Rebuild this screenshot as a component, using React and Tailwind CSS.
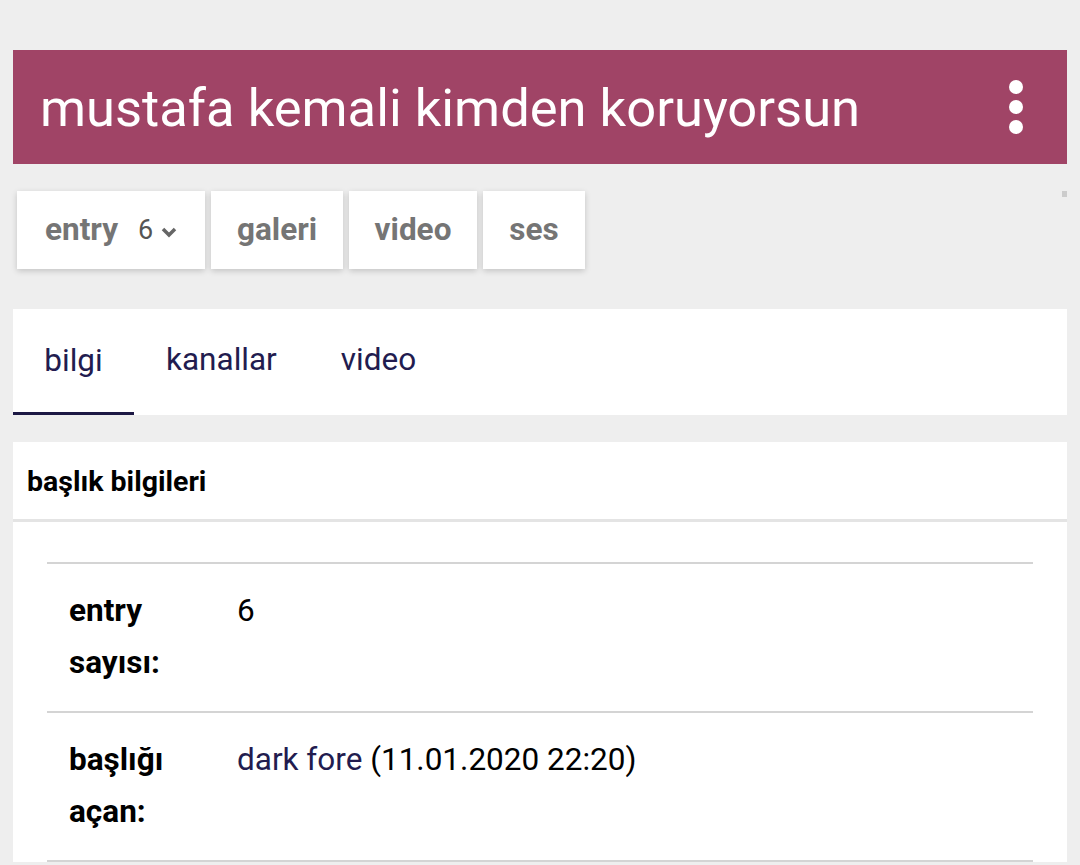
import React from 'react';

const rows = [
  { label: ['entry', 'sayısı:'], value: <span>6</span> },
  {
    label: ['başlığı', 'açan:'],
    value: (
      <span>
        <span className="text-[#221c4f]">dark fore</span> (11.01.2020 22:20)
      </span>
    ),
  },
];

const Dots = () => (
  <svg width="16" height="56" viewBox="0 0 16 56" className="fill-white">
    <circle cx="8" cy="8" r="7" />
    <circle cx="8" cy="28" r="7" />
    <circle cx="8" cy="48" r="7" />
  </svg>
);

export default function App() {
  return (
    <div className="min-h-[865px] bg-[#eeeeee] pt-[50px] px-[13px] text-black font-['Roboto',sans-serif] overflow-hidden h-[865px]">
      <div className="h-[114px] bg-[#a04466] flex items-center justify-between pl-[27px] pr-[43px]">
        <h1 className="text-white text-[52.5px] leading-none pt-[2px]">mustafa kemali kimden koruyorsun</h1>
        <Dots />
      </div>

      <div className="flex items-start justify-between mt-[27px]">
        <div className="flex gap-[6px] ml-[4px]">
          <button className="h-[78px] w-[188px] bg-white shadow-[0_2px_6px_rgba(0,0,0,0.18)] flex items-center pl-[28px] text-[#757575]">
            <span className="text-[31.5px] font-bold">entry</span>
            <span className="text-[27px] text-[#555] ml-[20px]">6</span>
            <svg width="18" height="14" viewBox="0 0 18 14" className="ml-[7px] mt-[4px]">
              <path d="M3 4 L9 10 L15 4" stroke="#666" strokeWidth="3.5" fill="none" />
            </svg>
          </button>
          <button className="h-[78px] w-[132px] bg-white shadow-[0_2px_6px_rgba(0,0,0,0.18)] text-[31.5px] font-bold text-[#757575]">galeri</button>
          <button className="h-[78px] w-[128px] bg-white shadow-[0_2px_6px_rgba(0,0,0,0.18)] text-[31.5px] font-bold text-[#757575]">video</button>
          <button className="h-[78px] w-[102px] bg-white shadow-[0_2px_6px_rgba(0,0,0,0.18)] text-[31.5px] font-bold text-[#757575]">ses</button>
        </div>
        <div className="w-[5px] h-[6px] bg-[#cccccc]" />
      </div>

      <div className="mt-[40px] h-[106px] bg-white flex items-stretch text-[#221c4f] text-[31.5px]">
        <div className="w-[121px] flex items-center justify-center border-b-[3px] border-[#1c1844] pt-[1px]">bilgi</div>
        <div className="px-[32px] flex items-center pb-[4px]">kanallar</div>
        <div className="px-[32px] flex items-center pb-[4px]">video</div>
      </div>

      <div className="mt-[27px] bg-white">
        <div className="h-[80px] flex items-center pl-[14px] pt-[3px] text-[28.5px] font-bold border-b-[3px] border-[#e4e4e4]">
          başlık bilgileri
        </div>
        <div className="px-[34px] pt-[40px]">
          <div className="border-t-2 border-[#d4d4d4]">
            {rows.map((r, i) => (
              <div key={i} className="flex pl-[22px] pt-[21px] pb-[22px] border-b-2 border-[#d4d4d4] text-[31.5px] leading-[52px]">
                <div className="w-[168px] font-bold">
                  {r.label[0]}
                  <br />
                  {r.label[1]}
                </div>
                <div>{r.value}</div>
              </div>
            ))}
          </div>
        </div>
      </div>
    </div>
  );
}
